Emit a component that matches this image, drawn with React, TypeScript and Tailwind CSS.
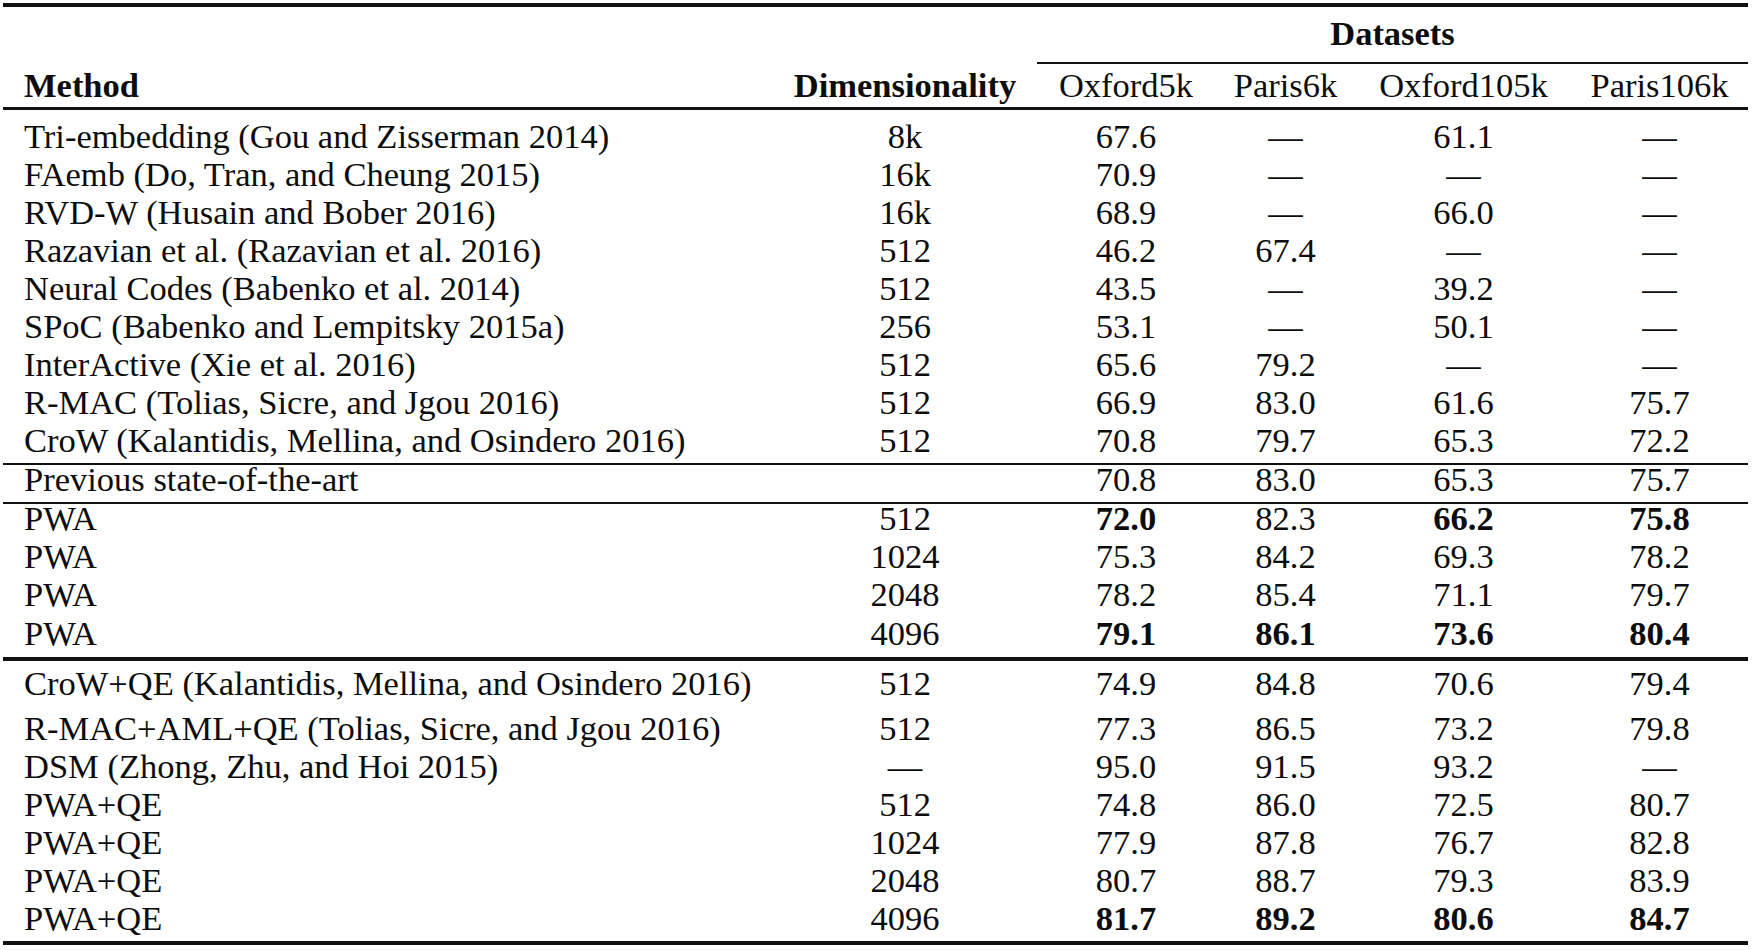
type Row = {
  cells: string[];
  bold?: number[];
  gap: string;
};

const cols = "grid grid-cols-[770px_264px_178px_141px_215px_177px]";

const baseline: Row[] = [
  { cells: ["Tri-embedding (Gou and Zisserman 2014)", "8k", "67.6", "—", "61.1", "—"], gap: "mt-[10.5px]" },
  { cells: ["FAemb (Do, Tran, and Cheung 2015)", "16k", "70.9", "—", "—", "—"], gap: "mt-[8px]" },
  { cells: ["RVD-W (Husain and Bober 2016)", "16k", "68.9", "—", "66.0", "—"], gap: "mt-[8px]" },
  { cells: ["Razavian et al. (Razavian et al. 2016)", "512", "46.2", "67.4", "—", "—"], gap: "mt-[8px]" },
  { cells: ["Neural Codes (Babenko et al. 2014)", "512", "43.5", "—", "39.2", "—"], gap: "mt-[8px]" },
  { cells: ["SPoC (Babenko and Lempitsky 2015a)", "256", "53.1", "—", "50.1", "—"], gap: "mt-[8px]" },
  { cells: ["InterActive (Xie et al. 2016)", "512", "65.6", "79.2", "—", "—"], gap: "mt-[8px]" },
  { cells: ["R-MAC (Tolias, Sicre, and Jgou 2016)", "512", "66.9", "83.0", "61.6", "75.7"], gap: "mt-[8px]" },
  { cells: ["CroW (Kalantidis, Mellina, and Osindero 2016)", "512", "70.8", "79.7", "65.3", "72.2"], gap: "mt-[8px]" },
];

const pwa: Row[] = [
  { cells: ["PWA", "512", "72.0", "82.3", "66.2", "75.8"], bold: [2, 4, 5], gap: "mt-[-1px]" },
  { cells: ["PWA", "1024", "75.3", "84.2", "69.3", "78.2"], gap: "mt-[8.3px]" },
  { cells: ["PWA", "2048", "78.2", "85.4", "71.1", "79.7"], gap: "mt-[8.3px]" },
  { cells: ["PWA", "4096", "79.1", "86.1", "73.6", "80.4"], bold: [2, 3, 4, 5], gap: "mt-[8.3px]" },
];

const withQe: Row[] = [
  { cells: ["CroW+QE (Kalantidis, Mellina, and Osindero 2016)", "512", "74.9", "84.8", "70.6", "79.4"], gap: "mt-[7px]" },
  { cells: ["R-MAC+AML+QE (Tolias, Sicre, and Jgou 2016)", "512", "77.3", "86.5", "73.2", "79.8"], gap: "mt-[15.5px]" },
  { cells: ["DSM (Zhong, Zhu, and Hoi 2015)", "—", "95.0", "91.5", "93.2", "—"], gap: "mt-[7.5px]" },
  { cells: ["PWA+QE", "512", "74.8", "86.0", "72.5", "80.7"], gap: "mt-[8.3px]" },
  { cells: ["PWA+QE", "1024", "77.9", "87.8", "76.7", "82.8"], gap: "mt-[8px]" },
  { cells: ["PWA+QE", "2048", "80.7", "88.7", "79.3", "83.9"], gap: "mt-[8px]" },
  { cells: ["PWA+QE", "4096", "81.7", "89.2", "80.6", "84.7"], bold: [2, 3, 4, 5], gap: "mt-[8.3px]" },
];

function TableRow({ row }: { row: Row }) {
  return (
    <div className={`${cols} h-[30px] leading-[30px] ${row.gap}`}>
      {row.cells.map((c, i) => (
        <div
          key={i}
          className={`whitespace-nowrap ${i === 0 ? "pl-[21px] text-left" : "text-center"} ${
            row.bold?.includes(i) ? "font-bold" : ""
          }`}
        >
          {c}
        </div>
      ))}
    </div>
  );
}

export default function App() {
  return (
    <div className="w-[1752px] h-[950px] bg-white overflow-hidden pt-[3px] font-['Liberation_Serif','Times_New_Roman',serif] text-[34.5px] text-[#0d0d0d]">
      <div className="ml-[3px] w-[1745px] flex flex-col">
        {/* top rule */}
        <div className="h-[4px] bg-[#111]" />

        {/* grouped header */}
        <div className={`${cols} h-[30px] leading-[30px] mt-[11px]`}>
          <div className="col-start-3 col-end-7 text-center font-bold">Datasets</div>
        </div>
        <div className={`${cols} mt-[14px]`}>
          <div className="col-start-3 col-end-7 h-[2px] bg-[#111]" />
        </div>

        <div className={`${cols} h-[30px] leading-[30px] mt-[5.5px]`}>
          <div className="pl-[21px] font-bold">Method</div>
          <div className="text-center font-bold">Dimensionality</div>
          <div className="text-center">Oxford5k</div>
          <div className="text-center">Paris6k</div>
          <div className="text-center">Oxford105k</div>
          <div className="text-center">Paris106k</div>
        </div>
        <div className="h-[3px] bg-[#111] mt-[7.5px]" />

        {baseline.map((r, i) => (
          <TableRow key={i} row={r} />
        ))}

        <div className="h-[2px] bg-[#111] mt-[8.5px]" />
        <TableRow row={{ cells: ["Previous state-of-the-art", "", "70.8", "83.0", "65.3", "75.7"], gap: "mt-[-1px]" }} />
        <div className="h-[2px] bg-[#111] mt-[7.8px]" />

        {pwa.map((r, i) => (
          <TableRow key={i} row={r} />
        ))}

        <div className="h-[4px] bg-[#111] mt-[9px]" />

        {withQe.map((r, i) => (
          <TableRow key={i} row={r} />
        ))}

        <div className="h-[4px] bg-[#111] mt-[8px]" />
      </div>
    </div>
  );
}
